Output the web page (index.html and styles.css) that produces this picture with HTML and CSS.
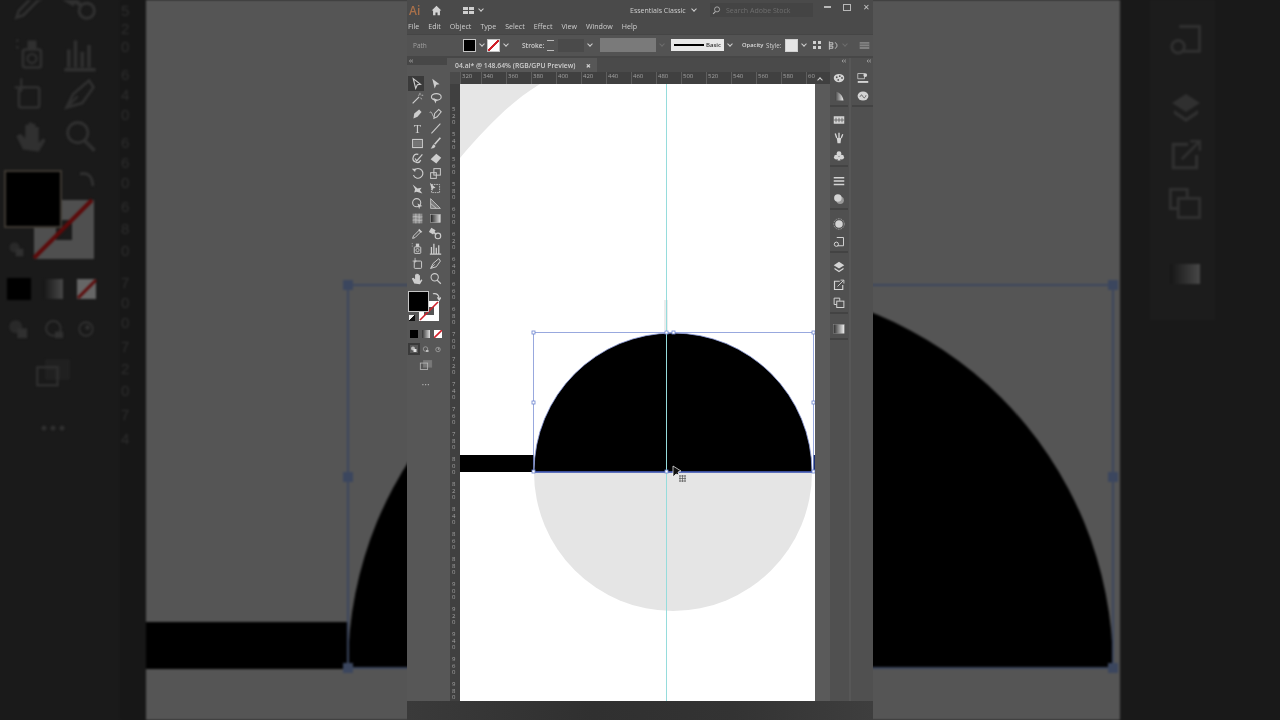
FILE: index.html
```html
<!DOCTYPE html>
<html lang="en">
<head>
    <meta charset="UTF-8">
    <title>04.ai - Illustrator</title>
    <link rel="stylesheet" href="styles.css">
</head>
<body>
    <!-- shared icons -->
    <svg class="defs" width="0" height="0">
        <defs>
            <linearGradient id="g-ghost"><stop offset="0" stop-color="#161616"/><stop offset="1" stop-color="#484848"/></linearGradient>
            <symbol id="i-select" viewBox="0 0 16 16"><path d="M4 2l9 7-4 .6L7 14z" fill="none" stroke="currentColor" stroke-width="1.4"/></symbol>
            <symbol id="i-direct" viewBox="0 0 16 16"><path d="M4 2l9 7-4 .6L7 14z" fill="currentColor"/></symbol>
            <symbol id="i-wand" viewBox="0 0 16 16"><path d="M2 14l8-8" stroke="currentColor" stroke-width="1.6"/><path d="M11 1v3M13 4h2M9 4h1M12 7l1 2" stroke="currentColor"/></symbol>
            <symbol id="i-lasso" viewBox="0 0 16 16"><ellipse cx="9" cy="6" rx="6" ry="4" fill="none" stroke="currentColor" stroke-width="1.4"/><path d="M5 7l6 3-2 1-1 3z" fill="currentColor"/></symbol>
            <symbol id="i-pen" viewBox="0 0 16 16"><path d="M3 14l1-6 6-5 3 3-5 6z" fill="currentColor"/></symbol>
            <symbol id="i-curve" viewBox="0 0 16 16"><path d="M1 7c2-4 4 6 5 5" fill="none" stroke="currentColor"/><path d="M6 14l1-6 5-5 3 3-5 6z" fill="none" stroke="currentColor" stroke-width="1.3"/></symbol>
            <symbol id="i-type" viewBox="0 0 16 16"><text x="8" y="14" text-anchor="middle" font-family="Liberation Serif, serif" font-size="15" fill="currentColor">T</text></symbol>
            <symbol id="i-line" viewBox="0 0 16 16"><path d="M3 14L14 2" stroke="currentColor" stroke-width="1.3"/></symbol>
            <symbol id="i-rect" viewBox="0 0 16 16"><rect x="2" y="3" width="12" height="10" fill="none" stroke="currentColor" stroke-width="1.3"/><rect x="3" y="4" width="10" height="8" fill="currentColor" opacity=".25"/></symbol>
            <symbol id="i-brush" viewBox="0 0 16 16"><path d="M14 1L7 9" stroke="currentColor" stroke-width="2"/><path d="M6 9l2 2c-1 3-4 3-6 3 2-1 2-4 4-5z" fill="currentColor"/></symbol>
            <symbol id="i-shaper" viewBox="0 0 16 16"><path d="M12 10a5 5 0 1 1-3-7" fill="none" stroke="currentColor" stroke-width="1.5"/><path d="M5 8l2 3 7-8" fill="none" stroke="currentColor" stroke-width="1.5"/></symbol>
            <symbol id="i-eraser" viewBox="0 0 16 16"><path d="M9 2l6 5-6 7-7-5z" fill="currentColor"/></symbol>
            <symbol id="i-rotate" viewBox="0 0 16 16"><path d="M4 4a6 6 0 1 1-1 6" fill="none" stroke="currentColor" stroke-width="1.4"/><path d="M1 2l5 0-1 4z" fill="currentColor"/></symbol>
            <symbol id="i-scale" viewBox="0 0 16 16"><rect x="6" y="2" width="8" height="8" fill="none" stroke="currentColor" stroke-width="1.2"/><rect x="2" y="7" width="7" height="7" fill="none" stroke="currentColor" stroke-width="1.2"/></symbol>
            <symbol id="i-warp" viewBox="0 0 16 16"><path d="M2 3l6 5 5-1-2 3 3 4-7-2-3 1 1-4z" fill="currentColor"/></symbol>
            <symbol id="i-free" viewBox="0 0 16 16"><rect x="3" y="3" width="10" height="10" fill="none" stroke="currentColor" stroke-dasharray="2 1"/><path d="M1 1l7 6-3 1-1 3z" fill="currentColor"/></symbol>
            <symbol id="i-builder" viewBox="0 0 16 16"><circle cx="7" cy="7" r="5" fill="none" stroke="currentColor" stroke-width="1.3"/><path d="M8 8l6 3-3 1-1 3z" fill="currentColor"/></symbol>
            <symbol id="i-persp" viewBox="0 0 16 16"><path d="M2 2v12h12z" fill="currentColor" opacity=".3"/><path d="M2 2v12h12zM2 8l7 6" fill="none" stroke="currentColor"/></symbol>
            <symbol id="i-mesh" viewBox="0 0 16 16"><rect x="2" y="2" width="12" height="12" fill="currentColor" opacity=".45"/><path d="M2 6c4-1 8 1 12 0M2 10c4-1 8 1 12 0M6 2v12M10 2v12" stroke="currentColor" fill="none" stroke-width=".8"/></symbol>
            <symbol id="i-gradient" viewBox="0 0 16 16"><defs><linearGradient id="g-tool"><stop offset="0" stop-color="#222"/><stop offset="1" stop-color="#ddd"/></linearGradient></defs><rect x="2" y="3" width="12" height="10" fill="url(#g-tool)" stroke="#bbb" stroke-width=".6"/></symbol>
            <symbol id="i-drop" viewBox="0 0 16 16"><path d="M2 14l1-3 7-7 2 2-7 7z" fill="none" stroke="currentColor" stroke-width="1.2"/><path d="M10 2l4 4-2 1-3-3z" fill="currentColor"/></symbol>
            <symbol id="i-blend" viewBox="0 0 16 16"><rect x="1" y="2" width="6" height="6" fill="currentColor" transform="rotate(30 4 5)"/><circle cx="11" cy="11" r="3.4" fill="none" stroke="currentColor" stroke-width="1.4"/><path d="M5 6l4 3" stroke="currentColor" stroke-width="2"/></symbol>
            <symbol id="i-spray" viewBox="0 0 16 16"><rect x="4" y="6" width="8" height="8" rx="1" fill="none" stroke="currentColor" stroke-width="1.2"/><rect x="6" y="2" width="4" height="4" fill="currentColor"/><circle cx="8" cy="10" r="2" fill="none" stroke="currentColor"/><path d="M1 2h1M1 5h1" stroke="currentColor"/></symbol>
            <symbol id="i-graph" viewBox="0 0 16 16"><path d="M3 14V6M6 14V2M9 14V7M12 14V4M1 15h14" stroke="currentColor" stroke-width="1.6"/></symbol>
            <symbol id="i-artboard" viewBox="0 0 16 16"><rect x="4" y="5" width="9" height="9" rx="1" fill="none" stroke="currentColor" stroke-width="1.2"/><path d="M5 1v6M2 5h5" stroke="currentColor"/></symbol>
            <symbol id="i-slice" viewBox="0 0 16 16"><path d="M2 14l3-6 7-6 2 3-5 7z" fill="none" stroke="currentColor" stroke-width="1.2"/><path d="M2 14l5-5" stroke="currentColor"/></symbol>
            <symbol id="i-hand" viewBox="0 0 16 16"><path d="M4 14L1 8l2-1 2 2V3h1.500v4V2H8v5V2.500h1.500V8V4H11v7l2-2 1 1-3 5z" fill="currentColor"/></symbol>
            <symbol id="i-zoom" viewBox="0 0 16 16"><circle cx="7" cy="6.500" r="4.500" fill="none" stroke="currentColor" stroke-width="1.3"/><path d="M10 10l4.500 4.500" stroke="currentColor" stroke-width="1.6"/></symbol>
            <symbol id="i-screen" viewBox="0 0 16 16"><rect x="5" y="2" width="10" height="8" fill="currentColor" opacity=".35" stroke="currentColor"/><rect x="1" y="5" width="9" height="8" fill="none" stroke="currentColor"/></symbol>
            <symbol id="i-draw1" viewBox="0 0 16 16"><circle cx="6" cy="6" r="4" fill="currentColor" opacity=".7"/><rect x="7" y="7" width="6" height="6" fill="currentColor"/></symbol>
            <symbol id="i-draw2" viewBox="0 0 16 16"><circle cx="7" cy="7" r="4.500" fill="none" stroke="currentColor" stroke-width="1.2"/><rect x="8" y="9" width="5" height="4" fill="currentColor"/></symbol>
            <symbol id="i-draw3" viewBox="0 0 16 16"><circle cx="8" cy="8" r="4.500" fill="none" stroke="currentColor" stroke-width="1.2"/><circle cx="9" cy="7" r="1.500" fill="currentColor"/></symbol>
            <symbol id="i-palette" viewBox="0 0 16 16"><ellipse cx="8" cy="8" rx="7" ry="5.500" fill="currentColor"/><circle cx="5" cy="7" r="1.200" fill="#555"/><circle cx="9" cy="5.500" r="1.200" fill="#555"/><circle cx="12" cy="8" r="1.200" fill="#555"/><circle cx="7" cy="10.500" r="1.200" fill="#555"/></symbol>
            <symbol id="i-guide" viewBox="0 0 16 16"><defs><linearGradient id="g-dock" x1="0" x2="1"><stop offset="0" stop-color="#444"/><stop offset="1" stop-color="#eee"/></linearGradient></defs><path d="M3 2c6 1 10 6 11 12H3z" fill="url(#g-dock)"/></symbol>
            <symbol id="i-swatch" viewBox="0 0 16 16"><rect x="1" y="3" width="14" height="10" fill="currentColor"/><path d="M4 5v6M8 5v6M12 5v6M1 8h14" stroke="#555"/></symbol>
            <symbol id="i-cup" viewBox="0 0 16 16"><path d="M5 8h6l-1 7H6z" fill="currentColor"/><path d="M5 8L3 2M8 8V1M11 8l2-5" stroke="currentColor" stroke-width="1.800"/></symbol>
            <symbol id="i-club" viewBox="0 0 16 16"><circle cx="8" cy="5" r="3.200" fill="currentColor"/><circle cx="4.500" cy="9.500" r="3.200" fill="currentColor"/><circle cx="11.500" cy="9.500" r="3.200" fill="currentColor"/><path d="M7 9h2l1 5H6z" fill="currentColor"/></symbol>
            <symbol id="i-lines" viewBox="0 0 16 16"><path d="M1 3.500h14M1 8h14M1 12.500h14" stroke="currentColor" stroke-width="2"/></symbol>
            <symbol id="i-trans" viewBox="0 0 16 16"><circle cx="6.500" cy="6.500" r="5" fill="currentColor"/><circle cx="9.500" cy="9.500" r="5" fill="currentColor" opacity=".55"/></symbol>
            <symbol id="i-sun" viewBox="0 0 16 16"><circle cx="8" cy="8" r="5" fill="currentColor"/><circle cx="8" cy="8" r="7" fill="none" stroke="currentColor" stroke-dasharray="1 1.200"/></symbol>
            <symbol id="i-shapes" viewBox="0 0 16 16"><path d="M5 2h9v11H6" fill="none" stroke="currentColor" stroke-width="1.300"/><circle cx="4.500" cy="11" r="2.800" fill="none" stroke="currentColor" stroke-width="1.300"/></symbol>
            <symbol id="i-layers" viewBox="0 0 16 16"><path d="M8 1l7 4.500L8 10 1 5.500z" fill="currentColor"/><path d="M2 9l6 4 6-4v2l-6 4-6-4z" fill="currentColor"/></symbol>
            <symbol id="i-export" viewBox="0 0 16 16"><path d="M9 3H2v11h11V8" fill="none" stroke="currentColor" stroke-width="1.500"/><path d="M6 10l8-8M10 1.500h4.500V6" fill="none" stroke="currentColor" stroke-width="1.200"/></symbol>
            <symbol id="i-copy" viewBox="0 0 16 16"><path d="M5 10H1.500V1.500H9V5" fill="none" stroke="currentColor" stroke-width="1.300"/><rect x="5" y="5.500" width="9.500" height="8.500" fill="none" stroke="currentColor" stroke-width="1.300"/></symbol>
            <symbol id="i-grad" viewBox="0 0 16 16"><defs><linearGradient id="g-panel"><stop offset="0" stop-color="#333"/><stop offset="1" stop-color="#eee"/></linearGradient></defs><rect x="1" y="2" width="14" height="12" fill="url(#g-panel)" stroke="#999" stroke-width=".5"/></symbol>
            <symbol id="i-libs" viewBox="0 0 16 16"><path d="M1 2h9v7H1z" fill="none" stroke="currentColor"/><circle cx="11" cy="4" r="2.500" fill="currentColor"/><path d="M1 12h14v2.500H1z" fill="currentColor"/></symbol>
            <symbol id="i-cc" viewBox="0 0 16 16"><ellipse cx="8" cy="8" rx="7.200" ry="6" fill="currentColor"/><path d="M4 9c2-4 3-2 4 0s3 2 4-2" fill="none" stroke="#555" stroke-width="1.200"/></symbol>
        </defs>
    </svg>

    <!-- blurred, darkened copy of the video behind the app -->
    <svg class="backdrop" viewBox="0 0 1280 720" width="1280" height="720">
        <rect x="146" width="974" height="720" fill="#555"/>
        <rect x="120" width="26" height="720" fill="#171717"/>
        <g class="ghost-ruler">
            <text><tspan x="121" y="16">5</tspan><tspan x="121" y="34">2</tspan><tspan x="121" y="52">0</tspan></text>
            <text><tspan x="121" y="80">6</tspan><tspan x="121" y="100">4</tspan><tspan x="121" y="120">0</tspan></text>
            <text><tspan x="121" y="148">6</tspan><tspan x="121" y="168">6</tspan><tspan x="121" y="188">0</tspan></text>
            <text><tspan x="121" y="212">6</tspan><tspan x="121" y="234">8</tspan><tspan x="121" y="256">0</tspan></text>
            <text><tspan x="121" y="288">7</tspan><tspan x="121" y="308">0</tspan><tspan x="121" y="328">0</tspan></text>
            <text><tspan x="121" y="352">7</tspan><tspan x="121" y="374">2</tspan><tspan x="121" y="396">0</tspan></text>
            <text><tspan x="121" y="420">7</tspan><tspan x="121" y="444">4</tspan></text>
        </g>
        <rect x="146" y="622" width="202" height="47" fill="#000"/>
        <path d="M348 668a382 382 0 0 1 765 0z" fill="#000"/>
        <rect x="348" y="285" width="765" height="383" fill="none" stroke="#3b465e" stroke-width="2"/>
        <rect x="343" y="280" width="10" height="10" fill="#3b465e"/>
        <rect x="1108" y="280" width="10" height="10" fill="#3b465e"/>
        <rect x="343" y="472" width="10" height="10" fill="#3b465e"/>
        <rect x="1108" y="472" width="10" height="10" fill="#3b465e"/>
        <rect x="343" y="663" width="10" height="10" fill="#3b465e"/>
        <rect x="1108" y="663" width="10" height="10" fill="#3b465e"/>
        <rect x="1120" width="160" height="720" fill="#191919"/>
        <rect x="1150" width="65" height="320" fill="#1c1c1c"/>
        <g class="ghost">
            <use href="#i-drop" x="12" y="-14" width="36" height="36"/>
            <use href="#i-blend" x="62" y="-14" width="36" height="36"/>
            <use href="#i-spray" x="14" y="36" width="36" height="36"/>
            <use href="#i-graph" x="62" y="36" width="36" height="36"/>
            <use href="#i-artboard" x="10" y="76" width="36" height="36"/>
            <use href="#i-slice" x="62" y="76" width="36" height="36"/>
            <use href="#i-hand" x="14" y="118" width="36" height="36"/>
            <use href="#i-zoom" x="62" y="118" width="36" height="36"/>
            <path d="M80 174c8-2 12 2 13 12" fill="none" stroke="currentColor" stroke-width="3"/>
            <use href="#i-draw1" x="7" y="240" width="20" height="20"/>
            <use href="#i-draw1" x="6" y="317" width="26" height="26"/>
            <use href="#i-draw2" x="42" y="317" width="26" height="26"/>
            <use href="#i-draw3" x="74" y="317" width="24" height="24"/>
            <use href="#i-screen" x="32" y="356" width="42" height="36"/>
            <circle cx="44" cy="428" r="2.500" fill="currentColor"/>
            <circle cx="53" cy="428" r="2.500" fill="currentColor"/>
            <circle cx="62" cy="428" r="2.500" fill="currentColor"/>
            <use href="#i-shapes" x="1168" y="22" width="36" height="36"/>
            <use href="#i-layers" x="1170" y="92" width="32" height="32"/>
            <use href="#i-export" x="1169" y="138" width="34" height="34"/>
            <use href="#i-copy" x="1167" y="186" width="36" height="36"/>
        </g>
        <path d="M34 200H94V259H34zM56 220H72V240H56z" fill="#555" fill-rule="evenodd" opacity=".9"/>
        <path d="M34 258L92 200" stroke="#5c0a0a" stroke-width="4"/>
        <rect x="5" y="171" width="56" height="56" fill="#000" stroke="#3f3a33" stroke-width="2"/>
        <rect x="7" y="278" width="24" height="22" fill="#000"/>
        <rect x="43" y="279" width="20" height="20" fill="url(#g-ghost)"/>
        <path d="M77 279h19v20H77z" fill="#666"/>
        <path d="M78 298L96 280" stroke="#5c0a0a" stroke-width="3"/>
        <rect x="1170" y="264" width="30" height="20" fill="url(#g-ghost)"/>
    </svg>

    <div class="app">
        <header class="titlebar">
            <span class="logo">Ai</span>
            <svg class="ic home" viewBox="0 0 16 16"><path d="M8 1l7 7h-2v7H9.500v-4h-3v4H3V8H1z" fill="currentColor"/></svg>
            <span class="arrange"><i></i><i></i><i></i><i></i></span>
            <span class="chev arrange-chev"></span>
            <span class="workspace-name">Essentials Classic</span>
            <span class="chev"></span>
            <div class="search">
                <svg class="ic" viewBox="0 0 16 16"><circle cx="9" cy="6" r="4.500" fill="none" stroke="currentColor" stroke-width="1.500"/><path d="M6 10l-4 4" stroke="currentColor" stroke-width="1.800"/></svg>
                <span>Search Adobe Stock</span>
            </div>
            <div class="winbtns">
                <span class="min"></span>
                <span class="max"></span>
                <span class="close">✕</span>
            </div>
        </header>

        <nav class="menubar">
            <span>File</span><span>Edit</span><span>Object</span><span>Type</span><span>Select</span><span>Effect</span><span>View</span><span>Window</span><span>Help</span>
        </nav>

        <div class="controlbar">
            <span class="path-label">Path</span>
            <span class="swatch swatch-fill"></span>
            <span class="chev"></span>
            <span class="swatch swatch-stroke"></span>
            <span class="chev"></span>
            <span class="stroke-label">Stroke:</span>
            <span class="spinner"></span>
            <span class="field"></span>
            <span class="chev"></span>
            <span class="dropdown"></span>
            <span class="chev faint"></span>
            <span class="brush-def"><i></i><b>Basic</b></span>
            <span class="chev"></span>
            <span class="opacity-label">Opacity</span>
            <span class="style-label">Style:</span>
            <span class="swatch swatch-style"></span>
            <span class="chev"></span>
            <span class="grid-btn"><i></i><i></i><i></i><i></i></span>
            <svg class="ic align-btn" viewBox="0 0 16 16"><path d="M2 2v12M2 4h5v3H2M2 9h5v3H2M10 4c4 0 4 8 0 8" fill="none" stroke="currentColor" stroke-width="1.300"/></svg>
            <span class="chev faint"></span>
            <svg class="ic list-btn" viewBox="0 0 16 16"><path d="M1 3h14v10H1z" fill="currentColor" opacity=".45"/><path d="M1 6h14M1 9.500h14" stroke="#555"/></svg>
        </div>

        <div class="workarea">
            <aside class="toolbar">
                <div class="panel-head">‹‹</div>
                <div class="tools">
                    <span class="tool on"><svg><use href="#i-select"/></svg></span><span class="tool"><svg><use href="#i-direct"/></svg></span>
                    <span class="tool"><svg><use href="#i-wand"/></svg></span><span class="tool"><svg><use href="#i-lasso"/></svg></span>
                    <span class="tool"><svg><use href="#i-pen"/></svg></span><span class="tool"><svg><use href="#i-curve"/></svg></span>
                    <span class="tool"><svg><use href="#i-type"/></svg></span><span class="tool"><svg><use href="#i-line"/></svg></span>
                    <span class="tool"><svg><use href="#i-rect"/></svg></span><span class="tool"><svg><use href="#i-brush"/></svg></span>
                    <span class="tool"><svg><use href="#i-shaper"/></svg></span><span class="tool"><svg><use href="#i-eraser"/></svg></span>
                    <span class="tool"><svg><use href="#i-rotate"/></svg></span><span class="tool"><svg><use href="#i-scale"/></svg></span>
                    <span class="tool"><svg><use href="#i-warp"/></svg></span><span class="tool"><svg><use href="#i-free"/></svg></span>
                    <span class="tool"><svg><use href="#i-builder"/></svg></span><span class="tool"><svg><use href="#i-persp"/></svg></span>
                    <span class="tool"><svg><use href="#i-mesh"/></svg></span><span class="tool"><svg><use href="#i-gradient"/></svg></span>
                    <span class="tool"><svg><use href="#i-drop"/></svg></span><span class="tool"><svg><use href="#i-blend"/></svg></span>
                    <span class="tool"><svg><use href="#i-spray"/></svg></span><span class="tool"><svg><use href="#i-graph"/></svg></span>
                    <span class="tool"><svg><use href="#i-artboard"/></svg></span><span class="tool"><svg><use href="#i-slice"/></svg></span>
                    <span class="tool"><svg><use href="#i-hand"/></svg></span><span class="tool"><svg><use href="#i-zoom"/></svg></span>
                </div>
                <div class="fillstroke">
                    <span class="fs-stroke"><svg viewBox="0 0 20 20"><path d="M1 19L19 1" stroke="#d0202a" stroke-width="1.600"/></svg></span>
                    <span class="fs-fill"></span>
                    <span class="fs-default"></span>
                    <svg class="fs-swap" viewBox="0 0 10 10"><path d="M1 2c4-1 7 1 7 6M6 6l2 3 2-3" fill="none" stroke="currentColor" stroke-width="1.300"/></svg>
                </div>
                <div class="modes">
                    <span class="mode mode-color"></span>
                    <span class="mode mode-grad"></span>
                    <span class="mode mode-none"><svg viewBox="0 0 10 10"><path d="M0 10L10 0" stroke="#d0202a" stroke-width="2"/></svg></span>
                </div>
                <div class="modes draw">
                    <span class="mode on"><svg><use href="#i-draw1"/></svg></span>
                    <span class="mode"><svg><use href="#i-draw2"/></svg></span>
                    <span class="mode"><svg><use href="#i-draw3"/></svg></span>
                </div>
                <span class="screen-btn"><svg><use href="#i-screen"/></svg></span>
                <span class="more">•••</span>
            </aside>

            <main class="document">
                <div class="doc-tab">
                    <span>04.ai* @ 148.64% (RGB/GPU Preview)</span>
                    <b>×</b>
                </div>
                <div class="ruler-top">
                    <span>320</span><span>340</span><span>360</span><span>380</span><span>400</span><span>420</span><span>440</span><span>460</span><span>480</span><span>500</span><span>520</span><span>540</span><span>560</span><span>580</span><span>600</span>
                </div>
                <div class="doc-body">
                    <div class="ruler-left">
                        <span>520</span><span>540</span><span>560</span><span>580</span><span>600</span><span>620</span><span>640</span><span>660</span><span>680</span><span>700</span><span>720</span><span>740</span><span>760</span><span>780</span><span>800</span><span>820</span><span>840</span><span>860</span><span>880</span><span>900</span><span>920</span><span>940</span><span>960</span><span>980</span>
                    </div>
                    <div class="artboard">
                        <!-- artwork: origin is the artboard's top left corner -->
                        <svg class="art" viewBox="0 0 355 617" width="355" height="617">
                            <path d="M0 0H80C50 18 24 46 0 74Z" fill="#e6e6e6"/>
                            <rect x="204" y="216" width="4" height="30" fill="#ececec"/>
                            <rect y="371" width="74" height="17" fill="#000"/>
                            <rect x="353" y="371" width="2" height="17" fill="#1c2f6e"/>
                            <path d="M74 388a139 139 0 0 0 278 0z" fill="#e5e5e5"/>
                            <path d="M74 388a139 139 0 0 1 278 0z" fill="#000"/>
                            <path d="M74 388a139 139 0 0 1 278 0" fill="none" stroke="#8c9bd8" stroke-width=".8"/>
                            <rect x="206" y="0" width="1" height="617" fill="#96dcdc"/>
                            <rect x="73.500" y="248.500" width="280" height="139.500" fill="none" stroke="#7f93d6" stroke-width=".8"/>
                            <path d="M74 388h279" stroke="#3c55b0" stroke-width="1.600"/>
                            <g fill="#fff" stroke="#6d84d0" stroke-width=".8">
                                <rect x="72" y="247" width="3" height="3"/>
                                <rect x="352" y="247" width="3" height="3"/>
                                <rect x="72" y="317" width="3" height="3"/>
                                <rect x="352" y="317" width="3" height="3"/>
                                <rect x="205" y="247" width="3" height="3"/>
                                <rect x="212" y="247" width="3" height="3"/>
                                <rect x="72" y="386" width="3" height="3"/>
                                <rect x="352" y="386" width="3" height="3"/>
                                <rect x="205" y="386" width="3" height="3"/>
                            </g>
                            <path d="M213 382v11l3-3 3 1-1-3 3-1z" fill="#111" stroke="#fff" stroke-width=".7"/>
                            <path d="M219 392h7M219 394.500h7M219 397h7M220 391v7M222.500 391v7M225 391v7" stroke="#444" stroke-width=".6" fill="none"/>
                        </svg>
                    </div>
                </div>
            </main>

            <div class="gutter">
                <span class="chev scroll-up"></span>
            </div>

            <aside class="dock">
                <div class="panel-head">‹‹</div>
                <div class="dock-group g1"><svg><use href="#i-palette"/></svg><svg><use href="#i-guide"/></svg></div>
                <div class="dock-group g2"><svg><use href="#i-swatch"/></svg><svg><use href="#i-cup"/></svg><svg><use href="#i-club"/></svg></div>
                <div class="dock-group g3"><svg><use href="#i-lines"/></svg><svg><use href="#i-trans"/></svg></div>
                <div class="dock-group g3"><svg><use href="#i-sun"/></svg><svg><use href="#i-shapes"/></svg></div>
                <div class="dock-group g4"><svg><use href="#i-layers"/></svg><svg><use href="#i-export"/></svg><svg><use href="#i-copy"/></svg></div>
                <div class="dock-group g5"><svg><use href="#i-grad"/></svg></div>
            </aside>

            <aside class="dock dock-right">
                <div class="panel-head">‹‹</div>
                <div class="dock-group g1"><svg><use href="#i-libs"/></svg><svg><use href="#i-cc"/></svg></div>
            </aside>
        </div>

        <footer class="bottom-bar"></footer>
    </div>
</body>
</html>
```

FILE: styles.css
```css
body {
    margin: 0;
    height: 720px;
    overflow: hidden;
    background-color: #1a1a1a;
    font-family: "Open Sans", "Liberation Sans", sans-serif;
    display: flex;
    justify-content: center;
}

.defs {
    position: absolute;
}

.backdrop {
    position: absolute;
    left: 0;
    top: 0;
    filter: blur(1px);
}

.ghost {
    color: #303030;
}

.ghost-ruler {
    fill: #2e2e2e;
    font-family: "Liberation Sans", sans-serif;
    font-size: 15px;
}

.app {
    position: relative;
    width: 466px;
    height: 720px;
    background-color: #575757;
    color: #cfcfcf;
    display: flex;
    flex-direction: column;
    flex-shrink: 0;
    font-size: 7.5px;
    /* the reference is a soft video frame */
    filter: blur(0.4px);
}

.ic {
    width: 11px;
    height: 11px;
    flex-shrink: 0;
}

/* title bar */
.titlebar {
    height: 19px;
    box-sizing: border-box;
    padding-top: 1px;
    display: flex;
    align-items: center;
    background-color: #4a4a4a;
}

.logo {
    width: 14px;
    margin-left: 2px;
    color: #a8704a;
    font-size: 12px;
    font-weight: 600;
}

.home {
    margin-left: 8px;
    color: #d2d2d2;
}

.arrange {
    margin-left: 21px;
    width: 11px;
    display: grid;
    grid-template-columns: 5px 5px;
    gap: 1px;
}

.arrange i {
    height: 3px;
    background-color: #cfcfcf;
}

.workspace-name {
    margin-left: 146px;
    width: 60px;
    white-space: nowrap;
    font-size: 7px;
}

.chev {
    width: 7px;
    height: 7px;
    flex-shrink: 0;
    position: relative;
}

.chev::before {
    content: "";
    position: absolute;
    left: 1.5px;
    top: 0.5px;
    width: 3px;
    height: 3px;
    border-right: 1px solid #d0d0d0;
    border-bottom: 1px solid #d0d0d0;
    transform: rotate(45deg);
}

.chev.faint::before {
    border-color: #6d6d6d;
}

.arrange-chev {
    margin-left: 3px;
}

.search {
    margin-left: 13px;
    width: 103px;
    height: 14px;
    display: flex;
    align-items: center;
    gap: 5px;
    padding-left: 2px;
    box-sizing: border-box;
    background-color: #444;
    color: #6e6e6e;
    font-size: 7px;
    white-space: nowrap;
}

.search .ic {
    width: 9px;
    height: 9px;
    color: #b5b5b5;
}

.winbtns {
    margin-left: 11px;
    display: flex;
    align-items: center;
    gap: 12px;
    padding-bottom: 6px;
}

.min {
    width: 7px;
    height: 2px;
    background-color: #b8b8b8;
}

.max {
    width: 6px;
    height: 5px;
    border: 1px solid #b8b8b8;
}

.close {
    color: #c6c6c6;
    font-size: 8px;
    line-height: 8px;
}

/* menu */
.menubar {
    height: 16px;
    box-sizing: border-box;
    padding: 0 0 2px 1px;
    display: flex;
    align-items: center;
    gap: 9px;
    background-color: #4a4a4a;
    font-size: 7.1px;
    border-bottom: 1px solid #454545;
}

/* control bar */
.controlbar {
    height: 20px;
    padding-bottom: 1px;
    display: flex;
    align-items: center;
    background-color: #535353;
    border-bottom: 2px solid #474747;
}

.path-label {
    margin-left: 6px;
    width: 50px;
    color: #a0a0a0;
    font-size: 6.5px;
}

.swatch {
    width: 11px;
    height: 11px;
    border: 1px solid #c4c4c4;
    flex-shrink: 0;
}

.swatch-fill {
    background-color: #000;
}

.controlbar .chev {
    margin-left: 2px;
    margin-right: 2px;
}

.swatch-stroke {
    background: linear-gradient(135deg, #fff 41%, #d0202a 41%, #d0202a 59%, #fff 59%);
}

.stroke-label {
    margin-left: 11px;
    width: 25px;
    color: #d0d0d0;
    font-size: 6.5px;
    font-weight: 600;
}

.spinner {
    width: 7px;
    height: 11px;
    border-top: 1px solid #bbb;
    border-bottom: 1px solid #bbb;
    box-sizing: border-box;
}

.field {
    margin-left: 4px;
    width: 26px;
    height: 13px;
    background-color: #4a4a4a;
}

.dropdown {
    margin-left: 5px;
    width: 56px;
    height: 14px;
    background-color: #7a7a7a;
}

.brush-def {
    margin-left: 4px;
    width: 53px;
    height: 12px;
    display: flex;
    align-items: center;
    gap: 2px;
    padding-left: 3px;
    box-sizing: border-box;
    background-color: #e8e8e8;
    color: #333;
    font-size: 6px;
    white-space: nowrap;
}

.brush-def i {
    width: 30px;
    height: 2px;
    background-color: #000;
}

.brush-def b {
    font-weight: 600;
}

.opacity-label {
    margin-left: 7px;
    width: 24px;
    color: #dedede;
    font-size: 5.8px;
    font-weight: 600;
}

.style-label {
    width: 19px;
    color: #cfcfcf;
    font-size: 6.2px;
}

.swatch-style {
    background-color: #e6e6e6;
    border-color: #d0d0d0;
}

.grid-btn {
    margin-left: 4px;
    width: 8px;
    display: grid;
    grid-template-columns: 3px 3px;
    gap: 2px;
}

.grid-btn i {
    height: 3px;
    background-color: #d0d0d0;
}

.align-btn {
    margin-left: 7px;
}

.list-btn {
    margin-left: 9px;
    color: #c0c0c0;
}

/* work area */
.workarea {
    height: 643px;
    display: flex;
}

.toolbar {
    width: 40px;
    flex-shrink: 0;
    display: flex;
    flex-direction: column;
    align-items: center;
    background-color: #575757;
}

.panel-head {
    align-self: stretch;
    height: 7px;
    padding: 0 2px;
    background-color: #474747;
    color: #d0d0d0;
    font-size: 7px;
    line-height: 6px;
}

.tools {
    margin-top: 11px;
    margin-left: -2px;
    width: 36px;
    display: grid;
    grid-template-columns: 18px 18px;
    grid-auto-rows: 15px;
}

.tool {
    display: flex;
    align-items: center;
    justify-content: center;
    color: #cdcdcd;
}

.tool svg {
    width: 13px;
    height: 13px;
}

.mode svg {
    width: 11px;
    height: 11px;
}

.tool.on {
    margin-right: 2px;
    background-color: #3a3a3a;
}

.fillstroke {
    position: relative;
    margin-top: 5px;
    margin-left: -2px;
    width: 36px;
    height: 34px;
}

.fs-fill {
    position: absolute;
    left: 0;
    top: 0;
    width: 19px;
    height: 19px;
    background-color: #000;
    border: 1px solid #c6c6c6;
}

.fs-stroke {
    position: absolute;
    left: 11px;
    top: 10px;
    width: 20px;
    height: 20px;
    background-color: #fff;
}

.fs-stroke::before {
    content: "";
    position: absolute;
    left: 5px;
    top: 6px;
    width: 10px;
    height: 8px;
    background-color: #555;
}

.fs-stroke svg {
    position: absolute;
    left: 0;
    top: 0;
    width: 20px;
    height: 20px;
}

.fs-default {
    position: absolute;
    left: 1px;
    top: 24px;
    width: 6px;
    height: 6px;
    background: linear-gradient(135deg, #eee 50%, #111 50%);
}

.fs-swap {
    position: absolute;
    left: 24px;
    top: 1px;
    width: 9px;
    height: 9px;
    color: #d0d0d0;
}

.modes {
    margin-top: 5px;
    margin-left: -2px;
    display: flex;
    gap: 4px;
}

.mode {
    width: 8px;
    height: 8px;
    display: flex;
    align-items: center;
    justify-content: center;
    color: #bbb;
}

.mode-color {
    background-color: #000;
}

.mode-grad {
    background: linear-gradient(90deg, #333, #ddd);
}

.mode-none {
    background-color: #fff;
}

.mode-none svg {
    width: 8px;
    height: 8px;
}

.modes.draw {
    margin-top: 7px;
}

.mode.on {
    outline: 2px solid #3a3a3a;
    color: #e0e0e0;
}

.screen-btn {
    margin-top: 6px;
    margin-left: -2px;
    width: 14px;
    height: 13px;
    color: #b8b8b8;
}

.screen-btn svg {
    width: 14px;
    height: 13px;
}

.more {
    margin-top: 9px;
    margin-left: -2px;
    color: #b0b0b0;
    font-size: 6px;
    letter-spacing: 0.5px;
}

/* document */
.document {
    width: 365px;
    margin-left: 3px;
    flex-shrink: 0;
    display: flex;
    flex-direction: column;
    overflow: hidden;
    background-color: #4a4a4a;
}

.doc-tab {
    align-self: flex-start;
    width: 147px;
    height: 14px;
    display: flex;
    align-items: center;
    justify-content: space-between;
    padding: 0 6px 0 5px;
    box-sizing: border-box;
    background-color: #575757;
    font-size: 6.8px;
    font-weight: 600;
    white-space: nowrap;
}

.doc-tab b {
    font-size: 9px;
}

.ruler-top {
    height: 12px;
    flex-shrink: 0;
    margin-left: 10px;
    display: flex;
    background-color: #404040;
    color: #a2a2a2;
    font-size: 6px;
    line-height: 8px;
}

.ruler-top span {
    width: 25px;
    flex-shrink: 0;
    border-left: 1px solid #5d5d5d;
    padding-left: 1px;
    box-sizing: border-box;
}

.ruler-top span:first-child {
    width: 21px;
}

.ruler-top span:last-child {
    width: 14px;
}

.doc-body {
    display: flex;
    height: 617px;
}

.ruler-left {
    width: 10px;
    flex-shrink: 0;
    padding-top: 22px;
    box-sizing: border-box;
    display: flex;
    flex-direction: column;
    overflow: hidden;
    background-color: #404040;
    color: #a2a2a2;
    font-size: 6px;
    line-height: 6.5px;
}

.ruler-left span {
    height: 25px;
    flex-shrink: 0;
    width: 5px;
    padding-left: 2px;
    word-break: break-all;
}

.artboard {
    width: 355px;
    height: 617px;
    flex-shrink: 0;
    background-color: #fff;
    position: relative;
}

.art {
    display: block;
}

.gutter {
    width: 15px;
    flex-shrink: 0;
    background: linear-gradient(#4a4a4a 14px, #404040 14px, #404040 26px, #5a5a5a 26px);
    margin-right: -2px;
}

.scroll-up {
    display: block;
    margin: 18px 0 0 2px;
    transform: rotate(180deg);
}

/* panel docks */
.dock {
    width: 19px;
    margin-left: 2px;
    padding-right: 1px;
    flex-shrink: 0;
    box-sizing: border-box;
    background-color: #505050;
    display: flex;
    flex-direction: column;
    color: #d4d4d4;
    position: relative;
}

.dock-right {
    width: 22px;
    padding: 0 0 0 1px;
}

.dock .panel-head {
    text-align: right;
    height: 13px;
    background-color: #505050;
}

.dock-group {
    display: flex;
    flex-direction: column;
    align-items: center;
    gap: 6px;
    box-sizing: border-box;
    padding-top: 1px;
    border-bottom: 2px solid #434343;
}

.dock-group svg {
    width: 12px;
    height: 12px;
    flex-shrink: 0;
}

.g1 {
    height: 36px;
}

.g2 {
    height: 60px;
    padding-top: 7px;
}

.g3 {
    height: 43px;
    padding-top: 8px;
}

.g4 {
    height: 61px;
    padding-top: 8px;
}

.g5 {
    height: 26px;
    padding-top: 9px;
}

.bottom-bar {
    flex: 1;
    background: linear-gradient(90deg, #3a3a3a, #303030 40%, #333 70%, #3e3e3e);
}
```
